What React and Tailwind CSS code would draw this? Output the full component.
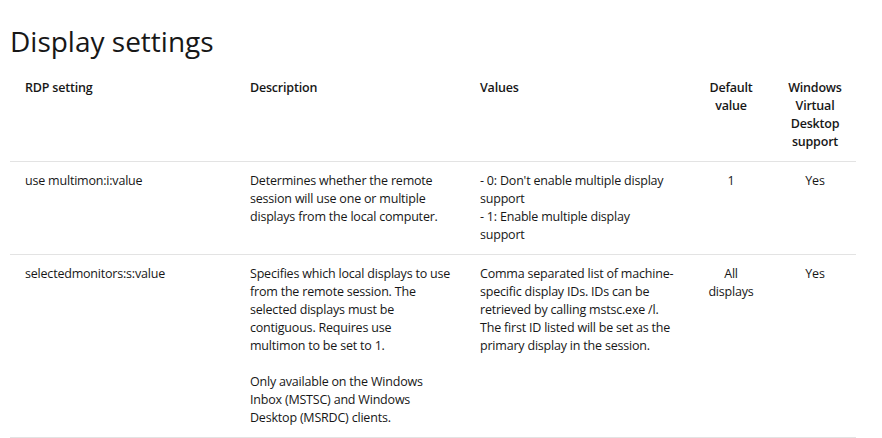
import React from "react";

const rows = [
  {
    setting: "use multimon:i:value",
    description: ["Determines whether the remote session will use one or multiple displays from the local computer."],
    values: ["- 0: Don't enable multiple display support", "- 1: Enable multiple display support"],
    def: "1",
    wvd: "Yes",
  },
  {
    setting: "selectedmonitors:s:value",
    description: [
      "Specifies which local displays to use from the remote session. The selected displays must be contiguous. Requires use multimon\u00a0to\u00a0be\u00a0set\u00a0to\u00a01.",
      "Only available on the Windows Inbox (MSTSC) and Windows Desktop (MSRDC) clients.",
    ],
    values: [
      "Comma separated list of machine-specific display IDs. IDs can be retrieved by calling mstsc.exe /l. The first ID listed will be set as the primary display in the session.",
    ],
    def: "All displays",
    wvd: "Yes",
  },
];

export default function App() {
  return (
    <div
      className="bg-white text-[#171717] pl-[10px] pr-[26px] pt-[19px]"
      style={{ fontFamily: '"Segoe UI", "Open Sans", sans-serif' }}
    >
      <h1 className="text-[28px] leading-[44px] font-normal">Display settings</h1>
      <table className="table-fixed w-[846px] mt-[5px] border-collapse text-[12.5px] leading-[18px] tracking-[-0.2px]">
        <colgroup>
          <col className="w-[225px]" />
          <col className="w-[230px]" />
          <col className="w-[223px]" />
          <col className="w-[86px]" />
          <col className="w-[82px]" />
        </colgroup>
        <thead>
          <tr className="border-b border-[#e3e3e3]">
            <th className="px-[15px] pt-[11px] pb-[10px] text-left align-top font-semibold">RDP setting</th>
            <th className="pl-[15px] pr-[12px] pt-[11px] pb-[10px] text-left align-top font-semibold">Description</th>
            <th className="pl-[15px] pr-[12px] pt-[11px] pb-[10px] text-left align-top font-semibold">Values</th>
            <th className="px-[15px] pt-[11px] pb-[10px] text-center align-top font-semibold">Default value</th>
            <th className="px-[12px] pt-[11px] pb-[10px] text-center align-top font-semibold">Windows Virtual Desktop support</th>
          </tr>
        </thead>
        <tbody>
          {rows.map((r) => (
            <tr key={r.setting} className="border-b border-[#e3e3e3]">
              <td className="px-[15px] pt-[10px] pb-[10px] align-top">{r.setting}</td>
              <td className="pl-[15px] pr-[12px] pt-[10px] pb-[10px] align-top">
                {r.description.map((d, i) => (
                  <p key={i} className={i > 0 ? "mt-[18px]" : ""}>{d}</p>
                ))}
              </td>
              <td className="pl-[15px] pr-[12px] pt-[10px] pb-[10px] align-top">
                {r.values.map((v, i) => (
                  <div key={i}>{v}</div>
                ))}
              </td>
              <td className="px-[15px] pt-[10px] pb-[10px] align-top text-center">{r.def}</td>
              <td className="px-[12px] pt-[10px] pb-[10px] align-top text-center">{r.wvd}</td>
            </tr>
          ))}
        </tbody>
      </table>
    </div>
  );
}
